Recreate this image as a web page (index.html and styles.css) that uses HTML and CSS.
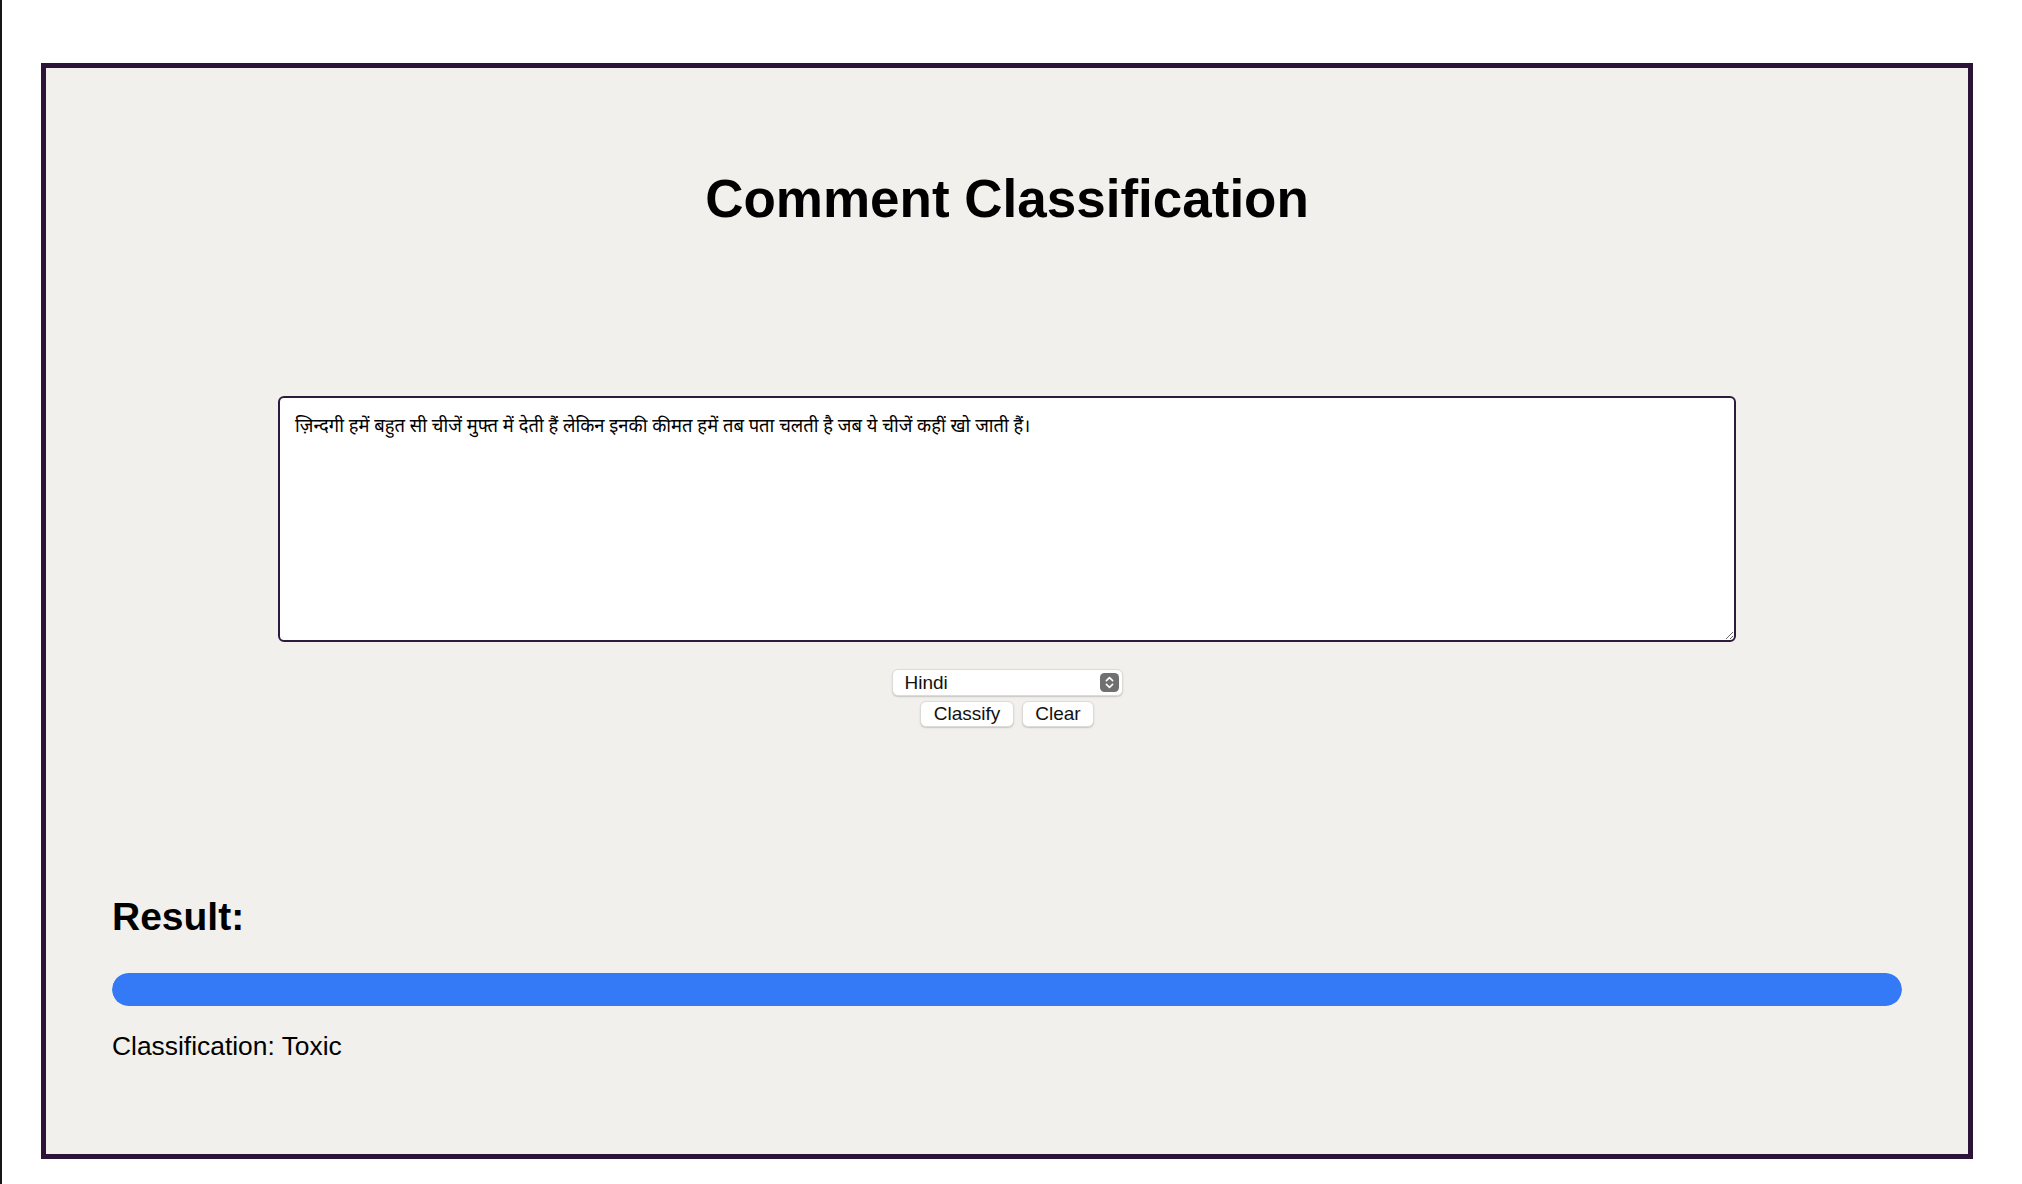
FILE: index.html
```html
<!DOCTYPE html>
<html lang="en">
<head>
<meta charset="utf-8">
<title>Comment Classification</title>
<link rel="stylesheet" href="styles.css">
</head>
<body>
<main class="frame">
  <h1 class="title">Comment Classification</h1>
  <section class="form">
    <textarea class="comment" lang="hi">ज़िन्दगी हमें बहुत सी चीजें मुफ्त में देती हैं लेकिन इनकी कीमत हमें तब पता चलती है जब ये चीजें कहीं खो जाती हैं।</textarea>
    <div class="select-wrap">
      <select class="lang">
        <option>Hindi</option>
        <option>English</option>
      </select>
      <svg class="select-arrows" width="19" height="19" viewBox="0 0 19 19" aria-hidden="true">
        <rect x="0" y="0" width="19" height="19" rx="4.5" fill="#707070"/>
        <path d="M6.4 7.6 L9.5 4.6 L12.6 7.6" fill="none" stroke="#fff" stroke-width="1.6" stroke-linecap="round" stroke-linejoin="round"/>
        <path d="M6.4 11.4 L9.5 14.4 L12.6 11.4" fill="none" stroke="#fff" stroke-width="1.6" stroke-linecap="round" stroke-linejoin="round"/>
      </svg>
    </div>
    <div class="actions">
      <button class="btn btn-classify" type="button">Classify</button>
      <button class="btn btn-clear" type="button">Clear</button>
    </div>
  </section>
  <h2 class="result-title">Result:</h2>
  <div class="bar"><div class="bar-fill" style="width: 100%"></div></div>
  <p class="classification">Classification: Toxic</p>
</main>
</body>
</html>
```

FILE: styles.css
```css
* {
  box-sizing: border-box;
}

html, body {
  margin: 0;
  padding: 0;
  background: #ffffff;
}

body {
  min-height: 100vh;
  border-left: 2px solid #15161a;
  font-family: "Liberation Sans", Arial, sans-serif;
  color: #000;
  overflow: hidden;
}

.frame {
  margin: 63px 49px 0 39px;
  border: 5px solid #2c1438;
  background: #f1f0ed;
  padding: 0 66px 93px;
  display: flex;
  flex-direction: column;
}

.title {
  margin: 101px 0 0;
  font-size: 53px;
  line-height: 60px;
  font-weight: 700;
  text-align: center;
}

.form {
  display: flex;
  flex-direction: column;
  align-items: center;
  margin-top: 167px;
}

.comment {
  display: block;
  width: 1458px;
  height: 246px;
  margin: 0;
  padding: 17px 15px 10px;
  border: 2px solid #2e1a3c;
  border-radius: 6px;
  background: #ffffff;
  font-family: "Noto Sans Devanagari", "Lohit Devanagari", "Noto Sans", sans-serif;
  font-size: 18.4px;
  line-height: 26px;
  color: #000;
  resize: both;
}

.select-wrap {
  position: relative;
  margin-top: 27px;
  width: 231px;
  height: 27px;
}

.lang {
  -webkit-appearance: none;
  appearance: none;
  width: 100%;
  height: 100%;
  margin: 0;
  padding: 0 30px 0 12px;
  border: 1px solid #dcdbd8;
  border-radius: 6px;
  background: #ffffff;
  box-shadow: 0 1px 1.5px rgba(0, 0, 0, 0.18);
  font-family: "Liberation Sans", Arial, sans-serif;
  font-size: 19px;
  color: #111;
  outline: none;
}

.select-arrows {
  position: absolute;
  right: 4px;
  top: 4px;
  pointer-events: none;
}

.actions {
  display: flex;
  gap: 8px;
  margin-top: 5px;
}

.btn {
  height: 26px;
  margin: 0;
  padding: 0;
  border: 1px solid #dcdbd8;
  border-radius: 6px;
  background: #ffffff;
  box-shadow: 0 1px 1.5px rgba(0, 0, 0, 0.18);
  font-family: "Liberation Sans", Arial, sans-serif;
  font-size: 19px;
  line-height: 24px;
  color: #111;
}

.btn-classify {
  width: 94px;
}

.btn-clear {
  width: 72px;
}

.result-title {
  margin: 167px 0 0;
  font-size: 39px;
  line-height: 45px;
  font-weight: 700;
}

.bar {
  margin-top: 34px;
  height: 33px;
  border-radius: 17px;
  background: transparent;
  overflow: hidden;
}

.bar-fill {
  height: 100%;
  border-radius: 17px;
  background: #3479f6;
}

.classification {
  margin: 25px 0 0;
  font-size: 26.4px;
  line-height: 30px;
}
```
